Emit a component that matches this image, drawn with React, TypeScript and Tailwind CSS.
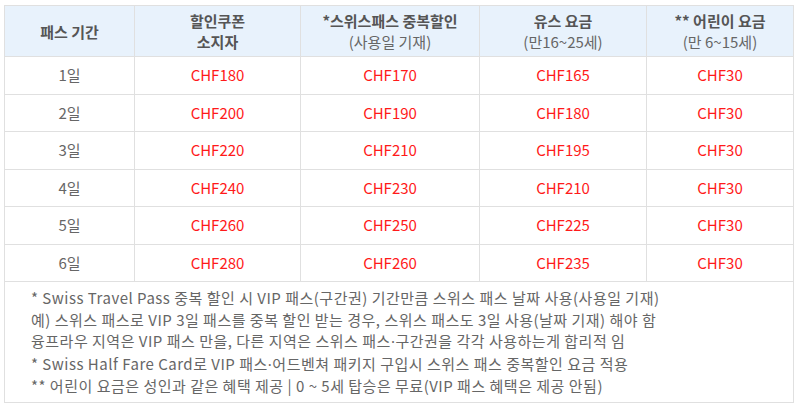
const ROWS = [
  { day: '1일', a: 'CHF180', b: 'CHF170', c: 'CHF165', d: 'CHF30' },
  { day: '2일', a: 'CHF200', b: 'CHF190', c: 'CHF180', d: 'CHF30' },
  { day: '3일', a: 'CHF220', b: 'CHF210', c: 'CHF195', d: 'CHF30' },
  { day: '4일', a: 'CHF240', b: 'CHF230', c: 'CHF210', d: 'CHF30' },
  { day: '5일', a: 'CHF260', b: 'CHF250', c: 'CHF225', d: 'CHF30' },
  { day: '6일', a: 'CHF280', b: 'CHF260', c: 'CHF235', d: 'CHF30' },
]

const Dot = () => <span style={{ fontFamily: '"Noto Sans", sans-serif' }}>·</span>

const NOTES = [
  <>* Swiss Travel Pass 중복 할인 시 VIP 패스(구간권) 기간만큼 스위스 패스 날짜 사용(사용일 기재)</>,
  <>예) 스위스 패스로 VIP 3일 패스를 중복 할인 받는 경우, 스위스 패스도 3일 사용(날짜 기재) 해야 함</>,
  <>융프라우 지역은 VIP 패스 만을, 다른 지역은 스위스 패스<Dot />구간권을 각각 사용하는게 합리적 임</>,
  <>* Swiss Half Fare Card로 VIP 패스<Dot />어드벤쳐 패키지 구입시 스위스 패스 중복할인 요금 적용</>,
  <>** 어린이 요금은 성인과 같은 혜택 제공 | 0 ~ 5세 탑승은 무료(VIP 패스 혜택은 제공 안됨)</>,
]

const td = 'border border-[#e0e0e0] text-center align-middle'

export default function App() {
  return (
    <div className="w-[800px] h-[404px] bg-white pl-[4px] pt-[5px] text-[15px] text-[#666]" style={{ fontFamily: '"Noto Sans CJK KR", "Noto Sans", sans-serif' }}>
      <table className="w-[789px] border-collapse table-fixed">
        <colgroup>
          <col className="w-[130px]" />
          <col className="w-[166px]" />
          <col className="w-[179px]" />
          <col className="w-[167px]" />
          <col className="w-[147px]" />
        </colgroup>
        <thead>
          <tr className="h-[51px] bg-[#e8f2fc] leading-[21px]">
            <th className={`${td} font-bold text-[#555]`}>패스 기간</th>
            <th className={`${td} font-bold text-[#555]`}>
              할인쿠폰<br />소지자
            </th>
            <th className={td}>
              <span className="font-bold text-[#555]">*스위스패스 중복할인</span><br />
              <span className="font-normal">(사용일 기재)</span>
            </th>
            <th className={td}>
              <span className="font-bold text-[#555]">유스 요금</span><br />
              <span className="font-normal">(만16~25세)</span>
            </th>
            <th className={td}>
              <span className="font-bold text-[#555]">** 어린이 요금</span><br />
              <span className="font-normal">(만 6~15세)</span>
            </th>
          </tr>
        </thead>
        <tbody>
          {ROWS.map((r) => (
            <tr key={r.day} className="h-[37.5px]">
              <td className={td}>{r.day}</td>
              <td className={`${td} text-[#ff1a1a]`}>{r.a}</td>
              <td className={`${td} text-[#ff1a1a]`}>{r.b}</td>
              <td className={`${td} text-[#ff1a1a]`}>{r.c}</td>
              <td className={`${td} text-[#ff1a1a]`}>{r.d}</td>
            </tr>
          ))}
          <tr>
            <td colSpan={5} className="border border-[#e0e0e0] pl-[26px] pt-[5px] pb-[5px] leading-[21.5px] text-left tracking-[0.5px]">
              {NOTES.map((n, i) => (
                <div key={i} className="whitespace-nowrap">{n}</div>
              ))}
            </td>
          </tr>
        </tbody>
      </table>
    </div>
  )
}
